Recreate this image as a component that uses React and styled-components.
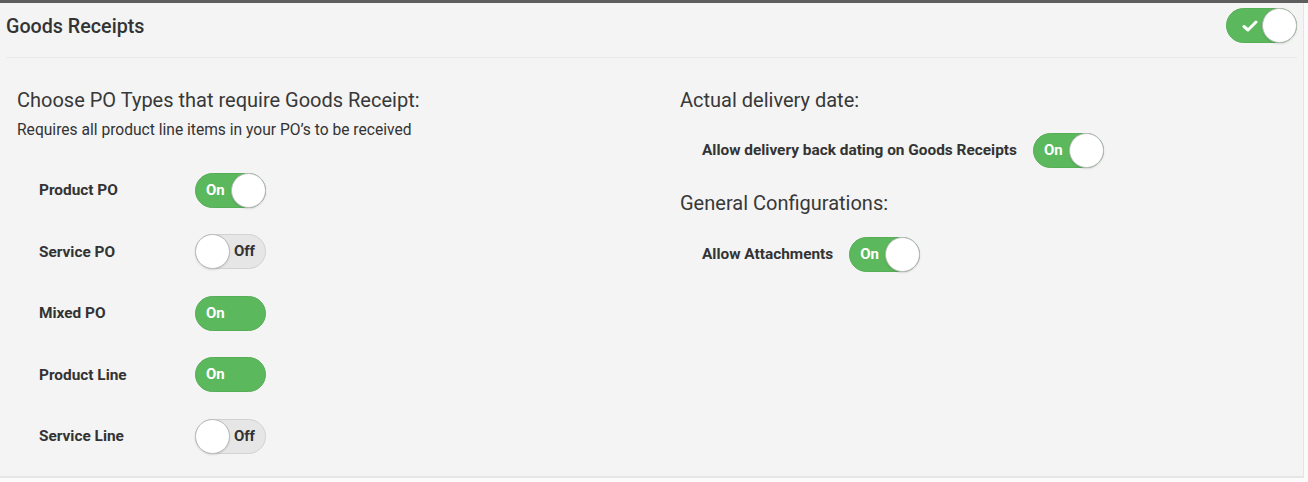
import React from "react";
import styled, { createGlobalStyle } from "styled-components";

const Global = createGlobalStyle`
  html, body { margin: 0; padding: 0; background: #fbfbfb; }
  body { font-family: Roboto, "Liberation Sans", Arial, sans-serif; color: #333; }
`;

const Page = styled.div`
  width: 1308px;
  height: 482px;
  border-top: 3px solid #5e5e5e;
  box-sizing: border-box;
  overflow: hidden;
`;

const Panel = styled.section`
  width: 1304px;
  height: 475px;
  background: #f4f4f4;
  border-right: 1px solid #e4e4e4;
  border-bottom: 2px solid #e6e6e6;
  box-sizing: border-box;
  display: flex;
  flex-direction: column;
`;

const Header = styled.header`
  height: 55px;
  box-sizing: border-box;
  margin: 0 6px 0 6px;
  border-bottom: 1px solid #e9e9e9;
  display: flex;
  align-items: flex-start;
  justify-content: space-between;
`;

const Title = styled.h2`
  margin: 12px 0 0 0;
  font-size: 19.7px;
  line-height: 24px;
  font-weight: 500;
  color: #333;
`;

const Body = styled.div`
  display: grid;
  grid-template-columns: 663px 1fr;
  padding: 0 17px;
`;

const Column = styled.div`
  display: flex;
  flex-direction: column;
`;

const Heading = styled.h3`
  margin: ${(p) => p.$top}px 0 0 0;
  font-size: 20px;
  font-weight: 400;
  color: #383838;
  line-height: 24px;
`;

const Sub = styled.p`
  margin: 8px 0 0 0;
  font-size: 15.6px;
  line-height: 20px;
  color: #333;
`;

const Rows = styled.div`
  display: flex;
  flex-direction: column;
  gap: 26.5px;
  margin-top: ${(p) => p.$top}px;
  padding-left: 22px;
`;

const Row = styled.div`
  display: flex;
  align-items: center;
  height: 35px;
`;

const Label = styled.span`
  font-size: 15.4px;
  font-weight: 700;
  color: #333;
  width: ${(p) => (p.$w ? `${p.$w}px` : "auto")};
  margin-right: ${(p) => (p.$w ? 0 : 16)}px;
`;

const Track = styled.div`
  position: relative;
  width: 71px;
  height: 35px;
  border-radius: 18px;
  box-sizing: border-box;
  background: ${(p) => (p.$on ? "#5cb85c" : "#e6e6e6")};
  border: 1px solid ${(p) => (p.$on ? "#56ae56" : "#d2d2d2")};
  display: flex;
  align-items: center;
  justify-content: ${(p) => (p.$on ? "flex-start" : "flex-end")};
  padding: ${(p) => (p.$on ? "0 0 0 10px" : "0 10px 0 0")};
  flex-shrink: 0;
`;

const ToggleText = styled.span`
  font-size: 15px;
  font-weight: 700;
  color: ${(p) => (p.$on ? "#fff" : "#333")};
  line-height: 1;
`;

const Knob = styled.span`
  position: absolute;
  top: -1px;
  ${(p) => (p.$on ? "right: -1px;" : "left: -1px;")}
  width: 35px;
  height: 35px;
  border-radius: 50%;
  background: #fff;
  border: 1px solid #b9b9b9;
  box-sizing: border-box;
  box-shadow: 0 1px 2px rgba(0, 0, 0, 0.12);
`;

const Toggle = ({ on, knob = true, check = false }) => (
  <Track $on={on}>
    {check ? (
      <svg width="16" height="14" viewBox="0 0 16 14" style={{ marginLeft: 5 }}>
        <path d="M2 7.5 L6 11 L14 3" fill="none" stroke="#fff" strokeWidth="3" strokeLinecap="round" strokeLinejoin="round" />
      </svg>
    ) : (
      <ToggleText $on={on}>{on ? "On" : "Off"}</ToggleText>
    )}
    {knob && <Knob $on={on} />}
  </Track>
);

const HeaderToggle = styled.div`
  margin-top: 5px;
`;

const leftRows = [
  { label: "Product PO", on: true, knob: true },
  { label: "Service PO", on: false, knob: true },
  { label: "Mixed PO", on: true, knob: false },
  { label: "Product Line", on: true, knob: false },
  { label: "Service Line", on: false, knob: true },
];

export default function App() {
  return (
    <>
      <Global />
      <Page>
        <Panel>
          <Header>
            <Title>Goods Receipts</Title>
            <HeaderToggle>
              <Toggle on check />
            </HeaderToggle>
          </Header>
          <Body>
            <Column>
              <Heading $top={30}>Choose PO Types that require Goods Receipt:</Heading>
              <Sub>Requires all product line items in your PO’s to be received</Sub>
              <Rows $top={32.5}>
                {leftRows.map((r) => (
                  <Row key={r.label}>
                    <Label $w={156}>{r.label}</Label>
                    <Toggle on={r.on} knob={r.knob} />
                  </Row>
                ))}
              </Rows>
            </Column>
            <Column>
              <Heading $top={30}>Actual delivery date:</Heading>
              <Rows $top={20.5}>
                <Row>
                  <Label>Allow delivery back dating on Goods Receipts</Label>
                  <Toggle on />
                </Row>
              </Rows>
              <Heading $top={23.5}>General Configurations:</Heading>
              <Rows $top={21.5}>
                <Row>
                  <Label>Allow Attachments</Label>
                  <Toggle on />
                </Row>
              </Rows>
            </Column>
          </Body>
        </Panel>
      </Page>
    </>
  );
}
